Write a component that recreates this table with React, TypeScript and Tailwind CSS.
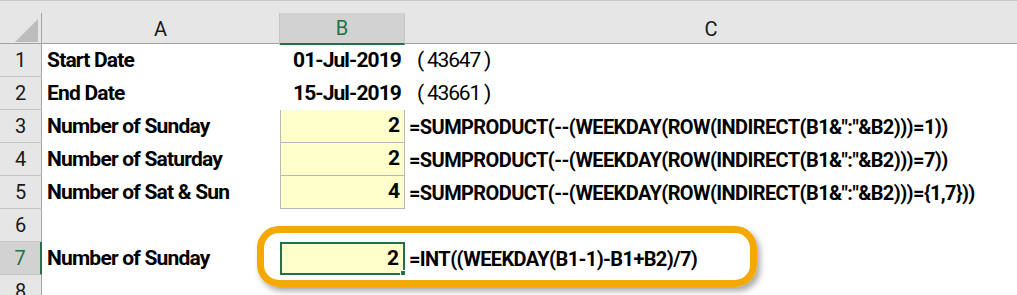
import React from 'react';

const cellFont = "font-['Roboto','Liberation_Sans',sans-serif]";

const rows = [
  { n: 1, label: 'Start Date', value: '01-Jul-2019', note: '( 43647 )', kind: 'date' },
  { n: 2, label: 'End Date', value: '15-Jul-2019', note: '( 43661 )', kind: 'date' },
  { n: 3, label: 'Number of Sunday', value: '2', note: '=SUMPRODUCT(--(WEEKDAY(ROW(INDIRECT(B1&":"&B2)))=1))', kind: 'calc' },
  { n: 4, label: 'Number of Saturday', value: '2', note: '=SUMPRODUCT(--(WEEKDAY(ROW(INDIRECT(B1&":"&B2)))=7))', kind: 'calc' },
  { n: 5, label: 'Number of Sat & Sun', value: '4', note: '=SUMPRODUCT(--(WEEKDAY(ROW(INDIRECT(B1&":"&B2)))={1,7}))', kind: 'calc' },
  { n: 6, label: '', value: '', note: '', kind: 'empty' },
  { n: 7, label: 'Number of Sunday', value: '2', note: '=INT((WEEKDAY(B1-1)-B1+B2)/7)', kind: 'active' },
  { n: 8, label: '', value: '', note: '', kind: 'empty' },
];

function RowHeader({ n, active }: { n: number; active: boolean }) {
  return (
    <div
      className={`h-[33px] flex items-center justify-center border-b border-[#c4c4c4] text-[20px] ${
        active
          ? 'bg-[#d2d2d2] text-[#217346] border-r-2 border-r-[#217346]'
          : 'bg-[#e6e6e6] text-[#1a1a1a] border-r border-r-[#a6a6a6]'
      } ${cellFont}`}
    >
      {n}
    </div>
  );
}

export default function App() {
  return (
    <div className="w-[1017px] h-[295px] overflow-hidden bg-white relative">
      {/* column headers */}
      <div className="h-[44px] bg-[#e6e6e6] border-t border-[#c8c8c8] pt-[12px] border-b border-b-[#a0a0a0]">
        <div className={`grid grid-cols-[42px_238px_125px_1fr] h-[31px] text-[20px] ${cellFont}`}>
          <div className="relative border-r border-[#a6a6a6]">
            <div className="absolute right-[3px] bottom-[3px] w-0 h-0 border-l-[23px] border-l-transparent border-b-[23px] border-b-[#bcbcbc]" />
          </div>
          <div className="flex items-center justify-center border-r border-[#c4c4c4] text-[#1a1a1a]">A</div>
          <div className="flex items-center justify-center bg-[#d2d2d2] border-b-2 border-[#217346] text-[#217346] border-r border-r-[#c4c4c4]">
            B
          </div>
          <div className="flex items-center justify-center text-[#1a1a1a]">C</div>
        </div>
      </div>

      {/* rows */}
      <div className="grid grid-cols-[42px_238px_125px_1fr]">
        {rows.map(r => (
          <React.Fragment key={r.n}>
            <RowHeader n={r.n} active={r.kind === 'active'} />
            <div
              className={`h-[33px] flex items-center pl-[5px] text-[21px] font-bold tracking-[-0.8px] whitespace-nowrap text-black ${cellFont}`}
            >
              {r.label}
            </div>
            <div
              className={`h-[33px] flex items-center justify-end pr-[4px] text-[21px] font-bold whitespace-nowrap text-black ${cellFont} ${
                r.kind === 'date' ? 'tracking-[-0.9px]' : ''
              } ${r.kind === 'calc' ? 'bg-[#ffffcc] border border-[#b8b8b8] border-t-0' : ''} ${
                r.kind === 'active' ? 'bg-[#ffffcc] border-2 border-[#217346] relative' : ''
              } ${r.n === 3 ? 'border-t' : ''}`}
            >
              {r.value}
              {r.kind === 'active' && (
                <span className="absolute -right-[3px] -bottom-[3px] w-[6px] h-[6px] bg-[#217346] border border-white" />
              )}
            </div>
            <div
              className={`h-[33px] flex items-center whitespace-nowrap text-black ${cellFont} ${
                r.kind === 'date'
                  ? 'pl-[12px] text-[21px] font-normal tracking-[-1.2px]'
                  : 'pl-[4px] text-[20px] font-bold tracking-[-0.6px]'
              }`}
            >
              {r.note}
            </div>
          </React.Fragment>
        ))}
      </div>

      {/* callout around row 7 */}
      <div className="absolute left-[257px] top-[226px] w-[500px] h-[61px] rounded-[22px] border-[7px] border-[#f5a800] shadow-[3px_4px_6px_rgba(0,0,0,0.35)] pointer-events-none" />
    </div>
  );
}
